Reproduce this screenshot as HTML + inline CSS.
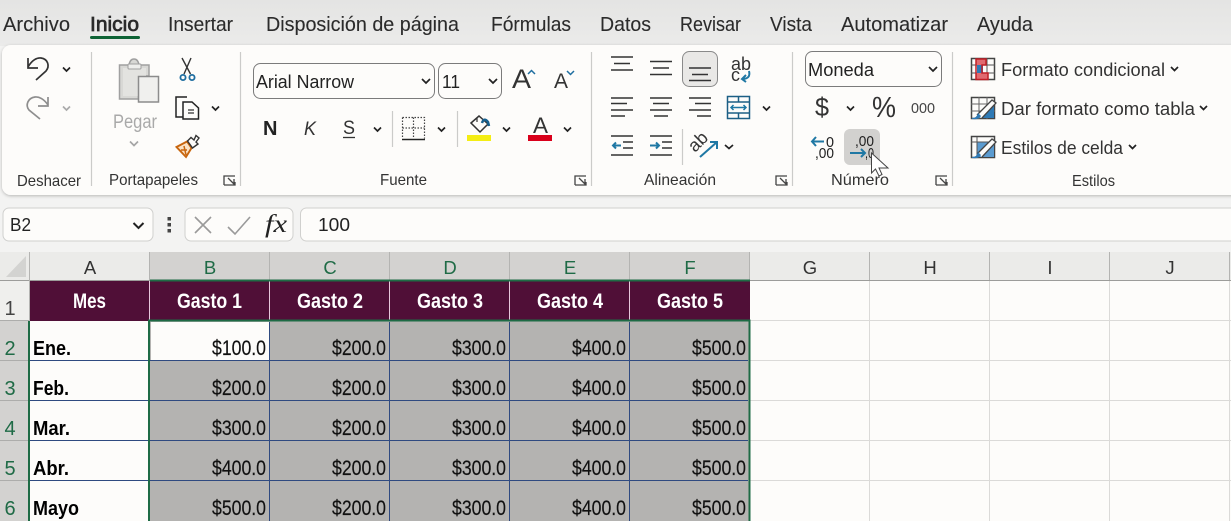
<!DOCTYPE html>
<html lang="es"><head><meta charset="utf-8"><title>Excel</title>
<style>
html,body{margin:0;padding:0;background:#f3f3f2;width:1231px;height:521px;overflow:hidden}
svg{display:block}
text{font-family:"Liberation Sans",sans-serif}
.tab{font-size:20px;fill:#2b2b2b;stroke:#2b2b2b;stroke-width:.1}
.lab{font-size:16px;fill:#333}
.st{font-size:18px;fill:#333}
.ch{fill:none;stroke:#222;stroke-width:1.7}
.ln{fill:none;stroke:#333;stroke-width:1.6}
.bl{fill:none;stroke:#1f78a4;stroke-width:2}
.hd{font-size:18.5px;fill:#333;text-anchor:middle}
.hs{font-size:18.5px;fill:#1f6b46;text-anchor:middle}
.rn{font-size:20px;fill:#1f6b46;text-anchor:middle}
.th{font-size:21px;fill:#fff;font-weight:bold;font-family:"Liberation Sans Narrow","Liberation Sans",sans-serif}
.tl{font-size:20.5px;fill:#000;font-weight:bold;font-family:"Liberation Sans Narrow","Liberation Sans",sans-serif}
.n{font-size:21px;fill:#111;stroke:#111;stroke-width:.15;font-family:"Liberation Sans Narrow","Liberation Sans",sans-serif}
.sep{stroke:#cbcbc9;stroke-width:1.2}
.gr{stroke:#dbdad8;stroke-width:1}
.nv{stroke:#2f4a80;stroke-width:1}
</style></head><body>
<svg width="1231" height="521" viewBox="0 0 1231 521" xmlns="http://www.w3.org/2000/svg">
<defs><linearGradient id="top" x1="0" x2="0" y1="0" y2="1"><stop offset="0" stop-color="#e4e4e3"/><stop offset="1" stop-color="#ebebea"/></linearGradient>
<filter id="sh" x="-2%" y="-5%" width="104%" height="115%"><feDropShadow dx="0" dy="1" stdDeviation="1.5" flood-color="#000" flood-opacity=".25"/></filter></defs>
<rect width="1231" height="521" fill="#f3f3f2"/>
<rect width="1231" height="46" fill="url(#top)"/>

<!-- tabs -->
<text class="tab" x="3" y="31" textLength="67" lengthAdjust="spacingAndGlyphs">Archivo</text>
<text class="tab" x="90" y="31" textLength="49" lengthAdjust="spacingAndGlyphs" style="stroke-width:.7">Inicio</text>
<rect x="90" y="36" width="50" height="3" rx="1.5" fill="#0e6335"/>
<text class="tab" x="168" y="31" textLength="65" lengthAdjust="spacingAndGlyphs">Insertar</text>
<text class="tab" x="266" y="31" textLength="193" lengthAdjust="spacingAndGlyphs">Disposición de página</text>
<text class="tab" x="491" y="31" textLength="80" lengthAdjust="spacingAndGlyphs">Fórmulas</text>
<text class="tab" x="600" y="31" textLength="51" lengthAdjust="spacingAndGlyphs">Datos</text>
<text class="tab" x="680" y="31" textLength="61" lengthAdjust="spacingAndGlyphs">Revisar</text>
<text class="tab" x="770" y="31" textLength="42" lengthAdjust="spacingAndGlyphs">Vista</text>
<text class="tab" x="841" y="31" textLength="107" lengthAdjust="spacingAndGlyphs">Automatizar</text>
<text class="tab" x="977" y="31" textLength="56" lengthAdjust="spacingAndGlyphs">Ayuda</text>

<!-- ribbon -->
<rect x="2" y="45" width="1240" height="150" rx="9" fill="#fdfcfa" filter="url(#sh)"/>
<g class="sep"><path d="M91.500 52V186M240.500 52V186M591.500 52V186M792.500 52V186M952.500 52V186M392.500 111V147M457.500 111V147M682.500 129V165"/></g>
<text class="lab" x="17" y="186" textLength="64" lengthAdjust="spacingAndGlyphs">Deshacer</text>
<text class="lab" x="109" y="185" textLength="89" lengthAdjust="spacingAndGlyphs">Portapapeles</text>
<text class="lab" x="380" y="185" textLength="47" lengthAdjust="spacingAndGlyphs">Fuente</text>
<text class="lab" x="644" y="185" textLength="72" lengthAdjust="spacingAndGlyphs">Alineación</text>
<text class="lab" x="831" y="185" textLength="58" lengthAdjust="spacingAndGlyphs">Número</text>
<text class="lab" x="1072" y="186" textLength="43" lengthAdjust="spacingAndGlyphs">Estilos</text>

<!-- launchers -->
<g fill="none" stroke="#444" stroke-width="1.300">
<path d="M224 185V176H235M228 178L234 184M234 179V185H228M224 185H235V182"/>
<path d="M575 185V176H586M579 178L585 184M585 179V185H579M575 185H586V182"/>
<path d="M776 185V176H787M780 178L786 184M786 179V185H780M776 185H787V182"/>
<path d="M936 185V176H947M940 178L946 184M946 179V185H940M936 185H947V182"/>
</g>

<!-- undo / redo -->
<path d="M28 58V68H38M28 67C32 60 37 57.500 41 58C48 59 50 66 46 71L36 80" fill="none" stroke="#333" stroke-width="1.700"/>
<path d="M48 97V106H38M48 105C44 99 39 96.500 35 97C28 98 25 105 29 110L40 119" fill="none" stroke="#8e8e8e" stroke-width="1.700"/>
<path class="ch" d="M63 67.500l3.500 3.500 3.500-3.500"/>
<path class="ch" style="stroke:#aaa" d="M63 106.500l3.500 3.500 3.500-3.500"/>

<!-- paste -->
<path d="M119.500 65H129Q130 59 134 59Q138 59 139 65H149V76H138.500V99H119.500Z" fill="#d8d8d5" stroke="#a0a0a0" stroke-width="1.500"/>
<rect x="123" y="68" width="23" height="28" fill="#e3e3e0" stroke="none"/>
<rect x="128" y="64" width="13" height="5" rx="1" fill="#eeeeec" stroke="#a0a0a0"/>
<rect x="138.500" y="76.500" width="20" height="25.500" fill="#f0f0ee" stroke="#8c8c8c" stroke-width="1.500"/>
<text x="113" y="128" font-size="19" fill="#a9a9a9" textLength="44" lengthAdjust="spacingAndGlyphs">Pegar</text>
<path class="ch" style="stroke:#a5a5a5" d="M130 141.500l4 4 4-4"/>

<!-- scissors -->
<path d="M182 58L190.500 74M191 58L184 74" fill="none" stroke="#333" stroke-width="1.400"/>
<circle cx="183" cy="77.500" r="2.600" fill="none" stroke="#1f6ea0" stroke-width="1.800"/>
<circle cx="192" cy="77.500" r="2.600" fill="none" stroke="#1f6ea0" stroke-width="1.800"/>

<!-- copy -->
<path d="M185 117H176V97H187" fill="none" stroke="#222" stroke-width="1.500"/>
<path d="M183 102H192L198.500 108V119H183Z" fill="#fdfcfa" stroke="#222" stroke-width="1.500"/>
<path d="M188 110H194M188 113H194" stroke="#333" stroke-width="1.200"/>
<path class="ch" d="M212 106.500l3.500 3.500 3.500-3.500"/>

<!-- format painter -->
<path d="M176.500 147L187 141.500L191.500 148L186 157Z" fill="#fbe3c6" stroke="#c8660f" stroke-width="1.900"/>
<path d="M181 150L187 150M184 146L186 155" stroke="#c8660f" stroke-width="1.500"/>
<path d="M187.500 141L191 137.500L194 140L196 135.500L199 138L196 142L198 144L192.500 148Z" fill="#fdfcfa" stroke="#333" stroke-width="1.400"/>

<!-- font boxes -->
<rect x="253.500" y="63.500" width="181" height="35" rx="7" fill="#fdfcfa" stroke="#7b7b7b"/>
<text x="256" y="88" font-size="18" fill="#222" textLength="98" lengthAdjust="spacingAndGlyphs">Arial Narrow</text>
<path class="ch" d="M422 79l4 4 4-4"/>
<rect x="438.500" y="63.500" width="63" height="35" rx="7" fill="#fdfcfa" stroke="#7b7b7b"/>
<text x="442" y="88" font-size="18" fill="#222" textLength="18" lengthAdjust="spacingAndGlyphs">11</text>
<path class="ch" d="M489 79l4 4 4-4"/>
<text x="512" y="88" font-size="27" fill="#333" textLength="19" lengthAdjust="spacingAndGlyphs">A</text>
<path d="M528 74l3.500-3.500 3.500 3.500" fill="none" stroke="#1f6ea0" stroke-width="1.500"/>
<text x="554" y="88" font-size="21" fill="#333" textLength="14" lengthAdjust="spacingAndGlyphs">A</text>
<path d="M567 71l3.500 3.500 3.500-3.500" fill="none" stroke="#1f6ea0" stroke-width="1.500"/>

<text x="263" y="135" font-size="20" font-weight="bold" fill="#222">N</text>
<text x="304" y="135" font-size="19" font-style="italic" fill="#333" textLength="12" lengthAdjust="spacingAndGlyphs">K</text>
<text x="343" y="134" font-size="19" fill="#333" textLength="12" lengthAdjust="spacingAndGlyphs">S</text>
<path d="M343 137.500H355" stroke="#333" stroke-width="1.300"/>
<path class="ch" d="M374 127.500l3.500 3.500 3.500-3.500"/>

<!-- borders -->
<path d="M402.500 117.500H424.500V138.500M402.500 117.500V138.500M413.500 117.500V138.500M402.500 128H424.500" fill="none" stroke="#444" stroke-width="1.200" stroke-dasharray="1.500 1.500"/>
<path d="M402 139.500H425" stroke="#222" stroke-width="1.500"/>
<path class="ch" d="M438 127.500l3.500 3.500 3.500-3.500"/>

<!-- fill color -->
<path d="M471 123L479 116L488 124L480 132Z" fill="#fdfcfa" stroke="#333" stroke-width="1.500"/>
<path d="M477 118V122" stroke="#333" stroke-width="1.200"/>
<path d="M482 123Q484 117 488 122L489 126" fill="none" stroke="#155f8e" stroke-width="2.500"/>
<rect x="467" y="135" width="24" height="6" fill="#f4ed14"/>
<path class="ch" d="M503 127.500l3.500 3.500 3.500-3.500"/>
<text x="533" y="133" font-size="22" fill="#333" textLength="15" lengthAdjust="spacingAndGlyphs">A</text>
<rect x="528" y="135" width="24" height="6" fill="#d9001b"/>
<path class="ch" d="M564 127.500l3.500 3.500 3.500-3.500"/>

<!-- alignment -->
<rect x="682.500" y="51.500" width="35" height="35" rx="7" fill="#e9e8e6" stroke="#8a8a8a"/>
<g class="ln">
<path d="M611 57H633M614 63.500H630M611 70H633"/>
<path d="M650 61.500H672M653 68H669M650 74.500H672"/>
<path d="M689 68H711M692 74.500H708M689 80.500H711"/>
<path d="M611 98H633M611 103.500H627M611 110H633M611 116H625"/>
<path d="M650 98H672M653 103.500H669M650 110H672M654 116H668"/>
<path d="M689 98H711M695 103.500H711M689 110H711M697 116H711"/>
<path d="M611 136H633M623 142H633M623 148H633M611 155H633"/>
<path d="M650 136H672M662 142H672M662 148H672M650 155H672"/>
</g>
<path class="bl" d="M621 145.500H613M616 142.500l-3 3 3 3"/>
<path class="bl" d="M650 145.500H659M656 142.500l3 3-3 3"/>

<text x="731" y="70" font-size="18" fill="#333" textLength="20" lengthAdjust="spacingAndGlyphs">ab</text>
<text x="731" y="81" font-size="18" fill="#333" textLength="9" lengthAdjust="spacingAndGlyphs">c</text>
<path class="bl" d="M749 71Q751 79 742 79M746 75l-4 4 4 3"/>

<rect x="727.500" y="96.500" width="22" height="22" fill="#fdfcfa" stroke="#1c5f85" stroke-width="1.500"/>
<path d="M728 102H749M728 113H749M738.500 97V102M738.500 113V118" stroke="#1c5f85" stroke-width="1.500"/>
<path d="M731 107.500H746M733.500 105l-2.500 2.500 2.500 2.500M743.500 105l2.500 2.500-2.500 2.500" fill="none" stroke="#1f78a4" stroke-width="1.500"/>
<path class="ch" d="M763 106.500l3.500 3.500 3.500-3.500"/>

<text transform="translate(695 153) rotate(-45)" font-size="18" fill="#333" textLength="20" lengthAdjust="spacingAndGlyphs">ab</text>
<path class="bl" d="M700 157L717 142M710 142H717V149"/>
<path class="ch" d="M725 145l4 3.500 4-3.500"/>

<!-- number -->
<rect x="805.500" y="51.500" width="136" height="35" rx="7" fill="#fdfcfa" stroke="#7b7b7b"/>
<text x="808" y="76" font-size="18" fill="#222" textLength="66" lengthAdjust="spacingAndGlyphs">Moneda</text>
<path class="ch" d="M929 67l4 4 4-4"/>
<text x="815" y="116" font-size="26" fill="#333" textLength="14" lengthAdjust="spacingAndGlyphs">$</text>
<path class="ch" d="M847 106.500l3.500 3.500 3.500-3.500"/>
<text x="872" y="117" font-size="29" fill="#333" textLength="24" lengthAdjust="spacingAndGlyphs">%</text>
<text x="911" y="113" font-size="15" fill="#444" textLength="24" lengthAdjust="spacingAndGlyphs">000</text>
<path class="bl" d="M824 141.500H812M816 137l-4 4.500 4 4.500"/>
<text x="826" y="147" font-size="15" fill="#222" textLength="8" lengthAdjust="spacingAndGlyphs">0</text>
<text x="815" y="158" font-size="15" fill="#222" textLength="19" lengthAdjust="spacingAndGlyphs">,00</text>
<rect x="844" y="129" width="36" height="36" rx="6" fill="#d2d1cf"/>
<text x="855" y="146" font-size="15" fill="#222" textLength="19" lengthAdjust="spacingAndGlyphs">,00</text>
<path class="bl" d="M850 153H865M861 149l4 4-4 4"/>
<text x="865" y="158" font-size="15" fill="#222" textLength="9" lengthAdjust="spacingAndGlyphs">,0</text>
<path d="M871.500 153V173L875.500 169L879 176L882 174.500L879 168H888Z" fill="#fff" stroke="#444" stroke-width="1"/>

<!-- styles -->
<rect x="971.500" y="58.500" width="23" height="21" fill="#fdfcfa" stroke="#444" stroke-width="1.500"/>
<path d="M971 65H995M971 73H995M979 58V80M987 58V80" stroke="#555"/>
<rect x="976" y="59" width="10" height="6" fill="#e06a70"/><rect x="976" y="73" width="12" height="6.500" fill="#e06a70"/>
<rect x="977" y="65" width="6" height="8" fill="#2f7ab5"/>
<path d="M976 59H986V65H982V73H988V79.500H976Z" fill="none" stroke="#c01f26" stroke-width="1.500"/>
<text class="st" x="1001" y="76" textLength="164" lengthAdjust="spacingAndGlyphs">Formato condicional</text>
<path class="ch" d="M1171 67l3.500 3.500 3.500-3.500"/>

<rect x="971.500" y="97.500" width="23" height="21" fill="#fdfcfa" stroke="#444" stroke-width="1.500"/>
<path d="M971 104H995M971 111H995M979 97V119M987 97V119" stroke="#666"/>
<path d="M981 118L994 104V118Z" fill="#2f7ab5"/>
<path d="M977 115L992 100L996 103L982 118" fill="#fdfcfa" stroke="#444" stroke-width="1.300"/>
<path d="M972 118Q977 118 978 113L981 116Q979 120 972 119Z" fill="#2f7ab5"/>
<text class="st" x="1001" y="115" textLength="194" lengthAdjust="spacingAndGlyphs">Dar formato como tabla</text>
<path class="ch" d="M1200 106l3.500 3.500 3.500-3.500"/>

<rect x="971.500" y="136.500" width="23" height="21" fill="#fdfcfa" stroke="#444" stroke-width="1.500"/>
<rect x="977" y="142" width="17" height="15" fill="#5b9bd0"/>
<path d="M971 142H995M977 137V158" stroke="#555"/>
<path d="M977 154L992 139L996 142L982 157" fill="#fdfcfa" stroke="#444" stroke-width="1.300"/>
<path d="M972 157Q977 157 978 152L981 155Q979 159 972 158Z" fill="#2f7ab5"/>
<text class="st" x="1001" y="154" textLength="122" lengthAdjust="spacingAndGlyphs">Estilos de celda</text>
<path class="ch" d="M1129 145l3.500 3.500 3.500-3.500"/>

<!-- formula bar -->
<rect x="3" y="208" width="150" height="33" rx="6" fill="#fdfcfa" stroke="#d0d0ce"/>
<text x="10" y="231" font-size="18.500" fill="#222" textLength="21" lengthAdjust="spacingAndGlyphs">B2</text>
<path d="M133.500 223l5 5 5-5" fill="none" stroke="#222" stroke-width="2"/>
<rect x="167.500" y="217" width="3.500" height="3.500" fill="#444"/><rect x="167.500" y="223" width="3.500" height="3.500" fill="#444"/><rect x="167.500" y="229" width="3.500" height="3.500" fill="#444"/>
<rect x="185" y="208" width="108" height="33" rx="6" fill="#fdfcfa" stroke="#d0d0ce"/>
<path d="M195 217L211 233M211 217L195 233" stroke="#9a9a9a" stroke-width="1.600"/>
<path d="M228 227L235 234L250 217" fill="none" stroke="#9a9a9a" stroke-width="1.600"/>
<text x="265" y="232" font-size="25" font-style="italic" fill="#222" textLength="22" lengthAdjust="spacingAndGlyphs" style="font-family:'Liberation Serif',serif">fx</text>
<rect x="300.500" y="208" width="940" height="33" rx="6" fill="#fdfcfa" stroke="#d0d0ce"/>
<text x="318" y="231" font-size="18.500" fill="#222" textLength="32" lengthAdjust="spacingAndGlyphs">100</text>

<!-- grid background -->
<rect x="0" y="252" width="1231" height="269" fill="#fdfcfa"/>
<rect x="0" y="252" width="1231" height="28" fill="#ebebe9"/>
<rect x="0" y="281" width="29" height="40" fill="#efefed"/>
<rect x="0" y="321" width="29" height="200" fill="#d3d2d0"/>
<rect x="150" y="252" width="600" height="28" fill="#d3d2d0"/>
<path d="M26 256V277H6Z" fill="#d3d3d1"/>
<path d="M0 280.500H1231" stroke="#9c9c9a"/>
<g class="gr"><path d="M869.500 281V521M989.500 281V521M1109.500 281V521M1229.500 281V521M750 320.500H1231M750 360.500H1231M750 400.500H1231M750 440.500H1231M750 480.500H1231"/></g>
<g stroke="#b4b4b2"><path d="M149.500 252V280M269.500 252V280M389.500 252V280M509.500 252V280M629.500 252V280M749.500 252V280M869.500 252V280M989.500 252V280M1109.500 252V280M1229.500 252V280M29.500 252V521"/></g>
<g stroke="#adadab"><path d="M0 360.500H29M0 400.500H29M0 440.500H29M0 480.500H29M0 320.500H29"/></g>

<text class="hd" x="90" y="274">A</text><text class="hs" x="210" y="274">B</text><text class="hs" x="330" y="274">C</text><text class="hs" x="450" y="274">D</text><text class="hs" x="570" y="274">E</text><text class="hs" x="690" y="274">F</text><text class="hd" x="810" y="274">G</text><text class="hd" x="930" y="274">H</text><text class="hd" x="1050" y="274">I</text><text class="hd" x="1170" y="274">J</text>
<text class="rn" x="10" y="315" style="fill:#444">1</text><text class="rn" x="10" y="355">2</text><text class="rn" x="10" y="395">3</text><text class="rn" x="10" y="435">4</text><text class="rn" x="10" y="475">5</text><text class="rn" x="10" y="515">6</text>

<!-- table header -->
<rect x="30" y="281" width="720" height="40" fill="#500f37"/>
<path d="M149.500 281V320M269.500 281V320M389.500 281V320M509.500 281V320M629.500 281V320" stroke="#e7c7dc"/>
<text class="th" x="73" y="308" textLength="33" lengthAdjust="spacingAndGlyphs">Mes</text>
<text class="th" x="177" y="308" textLength="65" lengthAdjust="spacingAndGlyphs">Gasto 1</text>
<text class="th" x="297" y="308" textLength="66" lengthAdjust="spacingAndGlyphs">Gasto 2</text>
<text class="th" x="417" y="308" textLength="66" lengthAdjust="spacingAndGlyphs">Gasto 3</text>
<text class="th" x="537" y="308" textLength="66" lengthAdjust="spacingAndGlyphs">Gasto 4</text>
<text class="th" x="657" y="308" textLength="66" lengthAdjust="spacingAndGlyphs">Gasto 5</text>

<!-- selection fill -->
<rect x="150" y="321" width="600" height="200" fill="#b4b3b1"/>
<rect x="151" y="322" width="119" height="39" fill="#fdfcfa"/>
<g class="nv"><path d="M269.500 322V521M389.500 322V521M509.500 322V521M629.500 322V521M30 360.500H748M30 400.500H748M30 440.500H748M30 480.500H748"/></g>
<path d="M150 280.500H750" stroke="#1e6b45" stroke-width="2"/>
<path d="M29 321V521" stroke="#1e6b45" stroke-width="2"/>
<path d="M149 320V521M749.500 320V521M148 320.500H750.500" stroke="#1e6b45" stroke-width="2" fill="none"/>

<!-- cells -->
<text class="tl" x="33" y="355" textLength="38" lengthAdjust="spacingAndGlyphs">Ene.</text>
<text class="tl" x="33" y="395" textLength="36" lengthAdjust="spacingAndGlyphs">Feb.</text>
<text class="tl" x="33" y="435" textLength="37" lengthAdjust="spacingAndGlyphs">Mar.</text>
<text class="tl" x="33" y="475" textLength="36" lengthAdjust="spacingAndGlyphs">Abr.</text>
<text class="tl" x="33" y="515" textLength="46" lengthAdjust="spacingAndGlyphs">Mayo</text>

<g>
<text class="n" x="212" y="355" textLength="54" lengthAdjust="spacingAndGlyphs">$100.0</text>
<text class="n" x="332" y="355" textLength="54" lengthAdjust="spacingAndGlyphs">$200.0</text>
<text class="n" x="452" y="355" textLength="54" lengthAdjust="spacingAndGlyphs">$300.0</text>
<text class="n" x="572" y="355" textLength="54" lengthAdjust="spacingAndGlyphs">$400.0</text>
<text class="n" x="692" y="355" textLength="54" lengthAdjust="spacingAndGlyphs">$500.0</text>
<text class="n" x="212" y="395" textLength="54" lengthAdjust="spacingAndGlyphs">$200.0</text>
<text class="n" x="332" y="395" textLength="54" lengthAdjust="spacingAndGlyphs">$200.0</text>
<text class="n" x="452" y="395" textLength="54" lengthAdjust="spacingAndGlyphs">$300.0</text>
<text class="n" x="572" y="395" textLength="54" lengthAdjust="spacingAndGlyphs">$400.0</text>
<text class="n" x="692" y="395" textLength="54" lengthAdjust="spacingAndGlyphs">$500.0</text>
<text class="n" x="212" y="435" textLength="54" lengthAdjust="spacingAndGlyphs">$300.0</text>
<text class="n" x="332" y="435" textLength="54" lengthAdjust="spacingAndGlyphs">$200.0</text>
<text class="n" x="452" y="435" textLength="54" lengthAdjust="spacingAndGlyphs">$300.0</text>
<text class="n" x="572" y="435" textLength="54" lengthAdjust="spacingAndGlyphs">$400.0</text>
<text class="n" x="692" y="435" textLength="54" lengthAdjust="spacingAndGlyphs">$500.0</text>
<text class="n" x="212" y="475" textLength="54" lengthAdjust="spacingAndGlyphs">$400.0</text>
<text class="n" x="332" y="475" textLength="54" lengthAdjust="spacingAndGlyphs">$200.0</text>
<text class="n" x="452" y="475" textLength="54" lengthAdjust="spacingAndGlyphs">$300.0</text>
<text class="n" x="572" y="475" textLength="54" lengthAdjust="spacingAndGlyphs">$400.0</text>
<text class="n" x="692" y="475" textLength="54" lengthAdjust="spacingAndGlyphs">$500.0</text>
<text class="n" x="212" y="515" textLength="54" lengthAdjust="spacingAndGlyphs">$500.0</text>
<text class="n" x="332" y="515" textLength="54" lengthAdjust="spacingAndGlyphs">$200.0</text>
<text class="n" x="452" y="515" textLength="54" lengthAdjust="spacingAndGlyphs">$300.0</text>
<text class="n" x="572" y="515" textLength="54" lengthAdjust="spacingAndGlyphs">$400.0</text>
<text class="n" x="692" y="515" textLength="54" lengthAdjust="spacingAndGlyphs">$500.0</text>
</g>
</svg>
</body></html>
